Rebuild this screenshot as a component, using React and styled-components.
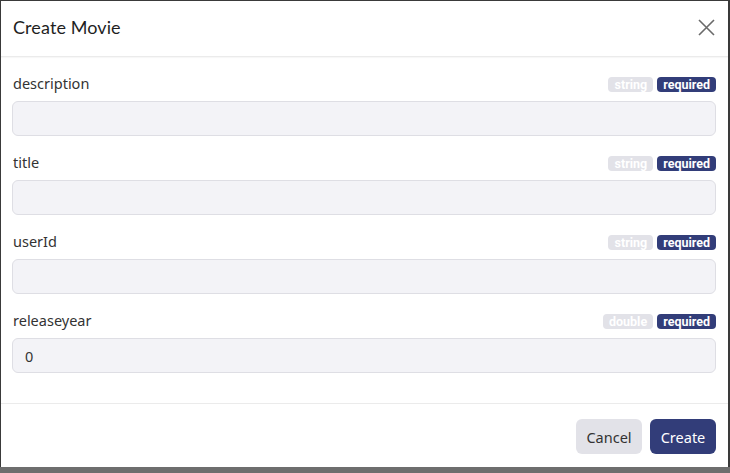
import React, { useState } from "react";
import styled, { createGlobalStyle } from "styled-components";

const GlobalStyle = createGlobalStyle`
  html, body {
    margin: 0;
    padding: 0;
    background: #4a4a4a;
  }
  body {
    font-family: "Noto Sans", "Open Sans", sans-serif;
  }
`;

const Frame = styled.div`
  width: 730px;
  height: 473px;
  box-sizing: border-box;
  background: #3a3a3a;
  border-bottom: 6px solid #6e6e6e;
  padding: 1px 2px 0 1px;
`;

const Modal = styled.div`
  background: #fff;
  height: 466px;
  display: flex;
  flex-direction: column;
`;

const Header = styled.div`
  height: 52px;
  display: flex;
  align-items: center;
  justify-content: space-between;
  padding: 0 12px 3px 12px;
  border-bottom: 1px solid #ebebeb;
  box-shadow: 0 1px 1px rgba(0, 0, 0, 0.03);
`;

const Title = styled.h2`
  margin: 0;
  font-family: "Lato", "Noto Sans", sans-serif;
  font-weight: 400;
  font-size: 18px;
  color: #1f1f1f;
  letter-spacing: 0.1px;
`;

const CloseButton = styled.button`
  border: none;
  background: transparent;
  padding: 0;
  width: 20px;
  height: 20px;
  display: flex;
  align-items: center;
  justify-content: center;
  cursor: pointer;
`;

const Body = styled.div`
  padding: 18px 12px 30px 11px;
  display: flex;
  flex-direction: column;
  gap: 18px;
  border-bottom: 1px solid #ebebeb;
`;

const Field = styled.div`
  display: flex;
  flex-direction: column;
  gap: 7px;
`;

const LabelRow = styled.div`
  height: 19px;
  display: flex;
  align-items: center;
  justify-content: space-between;
`;

const Label = styled.label`
  font-size: 14.5px;
  line-height: 19px;
  color: #333;
  padding-left: 1px;
  margin-top: -2px;
`;

const Badges = styled.div`
  display: flex;
  gap: 4px;
`;

const Badge = styled.span`
  height: 15px;
  line-height: 15px;
  padding: 0 6px;
  border-radius: 4px;
  font-family: "Roboto", sans-serif;
  font-weight: 700;
  font-size: 12.5px;
  color: #fff;
  background: ${(p) => (p.$required ? "#323d79" : "#e2e2e8")};
`;

const Input = styled.input`
  height: 35px;
  box-sizing: border-box;
  border: 1px solid #dedee4;
  border-radius: 6px;
  background: #f3f3f7;
  padding: 0 12px;
  font-family: "Noto Sans", sans-serif;
  font-size: 14.5px;
  color: #333;
  outline: none;
`;

const Footer = styled.div`
  display: flex;
  justify-content: flex-end;
  gap: 8px;
  padding: 15px 12px 12px;
`;

const Button = styled.button`
  width: 66px;
  height: 35px;
  border: none;
  border-radius: 6px;
  font-family: "Noto Sans", sans-serif;
  font-size: 14.5px;
  cursor: pointer;
  background: ${(p) => (p.$primary ? "#323d79" : "#e2e2e8")};
  color: ${(p) => (p.$primary ? "#fff" : "#333")};
`;

const fields = [
  { name: "description", type: "string", value: "" },
  { name: "title", type: "string", value: "" },
  { name: "userId", type: "string", value: "" },
  { name: "releaseyear", type: "double", value: "0" },
];

const App = () => {
  const [values, setValues] = useState(
    Object.fromEntries(fields.map((f) => [f.name, f.value]))
  );

  return (
    <Frame>
      <GlobalStyle />
      <Modal>
        <Header>
          <Title>Create Movie</Title>
          <CloseButton>
            <svg width="17" height="17" viewBox="0 0 17 17">
              <path
                d="M1 1L16 16M16 1L1 16"
                stroke="#6a6a6a"
                strokeWidth="1.6"
                fill="none"
              />
            </svg>
          </CloseButton>
        </Header>
        <Body>
          {fields.map((f) => (
            <Field key={f.name}>
              <LabelRow>
                <Label>{f.name}</Label>
                <Badges>
                  <Badge>{f.type}</Badge>
                  <Badge $required>required</Badge>
                </Badges>
              </LabelRow>
              <Input
                value={values[f.name]}
                onChange={(e) =>
                  setValues({ ...values, [f.name]: e.target.value })
                }
              />
            </Field>
          ))}
        </Body>
        <Footer>
          <Button>Cancel</Button>
          <Button $primary>Create</Button>
        </Footer>
      </Modal>
    </Frame>
  );
};

export default App;
